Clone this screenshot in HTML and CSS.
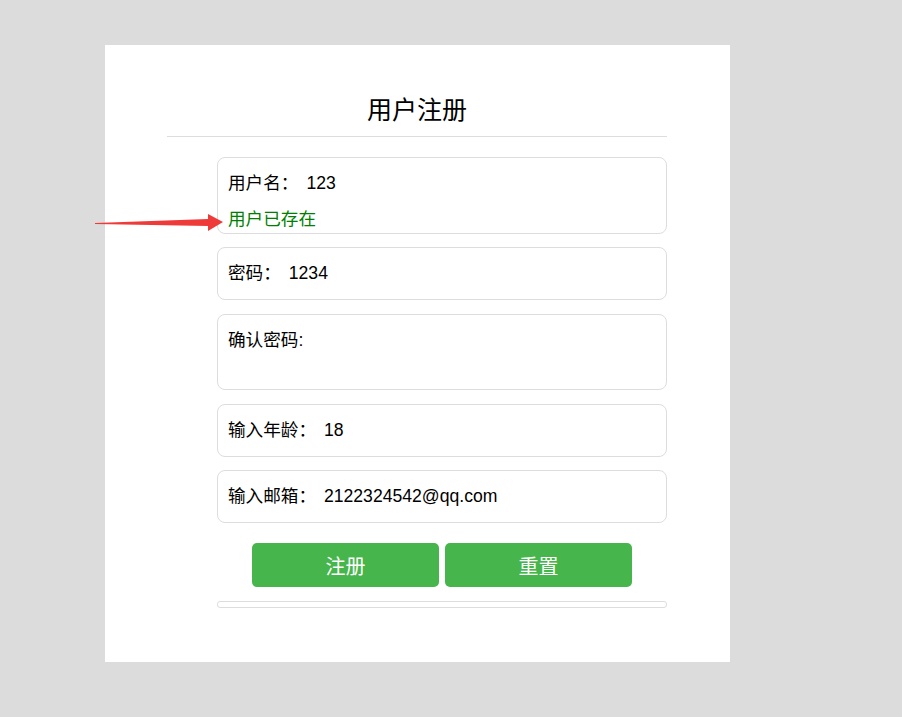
FILE: index.html
```html
<!DOCTYPE html>
<html lang="zh-CN">
<head>
<meta charset="utf-8">
<title>用户注册</title>
<link rel="stylesheet" href="styles.css">
</head>
<body>
<div class="card">
  <h1 class="title">用户注册</h1>
  <form class="form">
    <div class="field field-error">
      <div class="row"><label class="label">用户名：</label><input class="input" type="text" value="123"></div>
      <div class="msg">用户已存在</div>
    </div>
    <div class="field">
      <div class="row"><label class="label">密码：</label><input class="input" type="text" value="1234"></div>
    </div>
    <div class="field">
      <div class="row"><label class="label">确认密码:</label><input class="input" type="text" value=""></div>
      <div class="msg-empty"></div>
    </div>
    <div class="field field-tight">
      <div class="row"><label class="label">输入年龄：</label><input class="input" type="text" value="18"></div>
    </div>
    <div class="field">
      <div class="row"><label class="label">输入邮箱：</label><input class="input input-wide" type="text" value="2122324542@qq.com"></div>
    </div>
    <div class="buttons">
      <button class="btn" type="button">注册</button>
      <button class="btn" type="button">重置</button>
    </div>
    <div class="bar"></div>
  </form>
</div>
<svg class="arrow" width="132" height="20" viewBox="0 0 132 20">
  <polygon points="0,9 113,5 113,0 128,8 113,17 113,12 0,10" fill="#ef3a3a"/>
</svg>
</body>
</html>
```

FILE: styles.css
```css
html, body {
  margin: 0;
  padding: 0;
}
body {
  background: #dcdcdc;
  font-family: "Liberation Sans", "Noto Sans CJK SC", sans-serif;
  color: #000;
  min-height: 717px;
  position: relative;
}
.card {
  background: #fff;
  width: 563px;
  height: 568px;
  margin: 45px 0 0 105px;
  padding: 49px 0 0 62px;
  display: flex;
  flex-direction: column;
  align-items: flex-start;
}
.title {
  width: 500px;
  margin: 0;
  font-size: 25px;
  font-weight: normal;
  line-height: 32px;
  text-align: center;
  padding-bottom: 10px;
  border-bottom: 1px solid #dddddd;
}
.form {
  width: 450px;
  margin: 20px 0 0 50px;
  display: flex;
  flex-direction: column;
}
.field {
  border: 1px solid #dddddd;
  border-radius: 8px;
  padding: 15px 10px;
  margin-bottom: 14px;
}
.field-error {
  padding-bottom: 4px;
  margin-bottom: 13px;
}
.field-tight {
  margin-bottom: 13px;
}
.row {
  display: flex;
  align-items: baseline;
  height: 21px;
  font-size: 17.6px;
  line-height: 21px;
}
.label {
  white-space: nowrap;
}
.input {
  border: none;
  outline: none;
  padding: 0;
  margin: 0 0 0 8px;
  font-family: inherit;
  font-size: 17.6px;
  line-height: 21px;
  height: 21px;
  color: #000;
  width: 200px;
  background: transparent;
}
.input-wide {
  width: 300px;
}
.msg {
  margin-top: 15px;
  line-height: 20px;
  font-size: 17.6px;
  color: #008000;
}
.msg-empty {
  height: 23px;
}
.buttons {
  display: flex;
  justify-content: center;
  gap: 6px;
  margin-top: 6px;
}
.btn {
  width: 187px;
  height: 44px;
  border: none;
  border-radius: 5px;
  background: #46b54b;
  color: #fff;
  font-family: inherit;
  font-size: 20px;
  padding: 0;
}
.bar {
  height: 5px;
  margin-top: 14px;
  border: 1px solid #dddddd;
  border-radius: 3px;
}
.arrow {
  position: absolute;
  left: 95px;
  top: 214px;
}
```
